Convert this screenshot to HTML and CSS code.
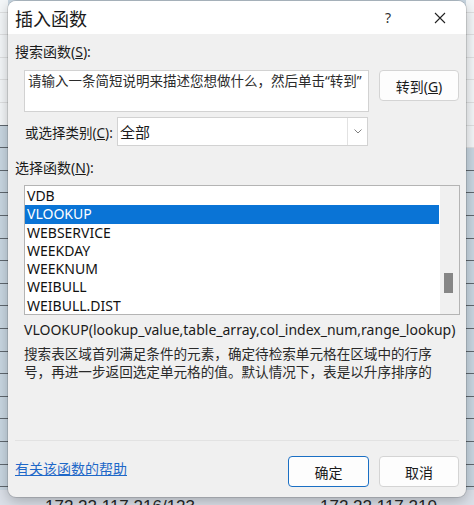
FILE: index.html
```html
<!DOCTYPE html>
<html lang="zh-CN">
<head>
    <meta charset="UTF-8">
    <title>插入函数</title>
    <link rel="stylesheet" href="styles.css">
</head>
<body>
    <div class="dialog">
        <div class="titlebar">
            <span class="title">插入函数</span>
            <span class="help">?</span>
            <span class="close">
                <svg width="12" height="12" viewBox="0 0 12 12"><path d="M1 1L11 11M11 1L1 11" stroke="#222" stroke-width="1.1" fill="none"/></svg>
            </span>
        </div>

        <div class="body">
            <div class="label">搜索函数(<u>S</u>):</div>
            <div class="search-row">
                <div class="search-box">请输入一条简短说明来描述您想做什么，然后单击“转到”</div>
                <button class="btn">转到(<u>G</u>)</button>
            </div>

            <div class="category-row">
                <span class="category-label">或选择类别(<u>C</u>):</span>
                <div class="select">
                    <span class="select-value">全部</span>
                    <span class="select-arrow">
                        <svg width="8" height="5" viewBox="0 0 8 5"><path d="M0.5 0.5L4 4L7.5 0.5" stroke="#808080" stroke-width="1" fill="none"/></svg>
                    </span>
                </div>
            </div>

            <div class="label label-n">选择函数(<u>N</u>):</div>
            <div class="list">
                <div class="items">
                    <div class="item">VDB</div>
                    <div class="item selected">VLOOKUP</div>
                    <div class="item">WEBSERVICE</div>
                    <div class="item">WEEKDAY</div>
                    <div class="item">WEEKNUM</div>
                    <div class="item">WEIBULL</div>
                    <div class="item">WEIBULL.DIST</div>
                </div>
                <div class="scrollbar"><div class="thumb"></div></div>
            </div>

            <div class="signature">VLOOKUP(lookup_value,table_array,col_index_num,range_lookup)</div>
            <div class="desc">搜索表区域首列满足条件的元素，确定待检索单元格在区域中的行序号，再进一步返回选定单元格的值。默认情况下，表是以升序排序的</div>

            <div class="footer">
                <a class="help-link" href="#">有关该函数的帮助</a>
                <button class="btn btn-default">确定</button>
                <button class="btn">取消</button>
            </div>
        </div>
    </div>
    <div class="sheet-row">
        <span class="cell-a">172.22.117.216/123</span>
        <span class="cell-b">172.22.117.210</span>
    </div>
</body>
</html>
```

FILE: styles.css
```css
* {
    margin: 0;
    padding: 0;
    box-sizing: border-box;
}
body {
    width: 474px;
    height: 505px;
    overflow: hidden;
    font-family: "Noto Sans", "Noto Sans CJK SC", sans-serif;
    color: #1b1b1b;
    background:
        linear-gradient(to bottom, rgba(255, 255, 255, 0.8) 0 125px, transparent 125px) left top / 8px 100% no-repeat,
        linear-gradient(to bottom, rgba(255, 255, 255, 0.8) 0 148px, transparent 148px) right top / 8px 100% no-repeat,
        repeating-linear-gradient(to bottom, transparent 0 11.6px, #5f686f 11.6px 12.6px, transparent 12.6px 22.6px),
        linear-gradient(to bottom, #c9d7e2 0 490px, #dbe0e8 490px);
}
.dialog {
    width: 458px;
    height: 496px;
    margin: 1px 0 0 8px;
    background: #f0f0f0;
    border-radius: 8px;
    overflow: hidden;
    display: flex;
    flex-direction: column;
    box-shadow: 0 0 0 1px rgba(0, 0, 0, 0.12), 0 4px 14px rgba(0, 0, 0, 0.25);
}
.titlebar {
    height: 33px;
    background: #fff;
    display: flex;
    align-items: center;
    padding: 0 7px;
}
.title {
    font-family: "Noto Sans CJK SC", sans-serif;
    font-size: 18px;
    color: #1a1a1a;
}
.help {
    margin-left: auto;
    font-size: 14px;
    color: #333;
    width: 12px;
    text-align: center;
}
.close {
    display: flex;
    margin: 0 13px 0 40px;
}
.body {
    flex: 1;
    display: flex;
    flex-direction: column;
    padding: 0 7px;
}
.label {
    font-size: 14px;
    line-height: 20px;
    margin-top: 8px;
}
.search-row {
    display: flex;
    align-items: flex-start;
    margin-top: 8px;
    margin-left: 9px;
}
.search-box {
    width: 345px;
    height: 42px;
    background: #fff;
    border: 1px solid #d2d2d2;
    font-size: 13.5px;
    line-height: 18px;
    padding: 1px 3px;
    color: #2b2b2b;
    white-space: nowrap;
    overflow: hidden;
}
.btn {
    width: 80px;
    height: 31px;
    margin-left: 10px;
    background: #fdfdfd;
    border: 1px solid #d4d4d4;
    border-radius: 4px;
    font-family: "Noto Sans", "Noto Sans CJK SC", sans-serif;
    font-size: 14px;
    color: #1b1b1b;
}
.category-row {
    display: flex;
    align-items: center;
    margin-top: 5px;
    margin-left: 10px;
}
.category-label {
    width: 92px;
    font-size: 13.5px;
}
.select {
    width: 251px;
    height: 29px;
    display: flex;
    background: #fff;
    border: 1px solid #d2d2d2;
}
.select-value {
    flex: 1;
    font-family: "Noto Sans CJK SC", sans-serif;
    font-size: 15px;
    line-height: 27px;
    padding-left: 2px;
}
.select-arrow {
    width: 20px;
    border-left: 1px solid #e2e2e2;
    display: flex;
    align-items: center;
    justify-content: center;
}
.label-n {
    margin-top: 12px;
}
.list {
    width: 436px;
    height: 130px;
    margin: 7px 0 0 9px;
    border: 1px solid #b4b4b4;
    background: #fff;
    display: flex;
}
.items {
    flex: 1;
    padding: 1px 1px 0 0;
}
.item {
    height: 18.3px;
    line-height: 18px;
    font-size: 14px;
    padding-left: 2px;
    color: #111;
}
.item.selected {
    background: #0a74d6;
    color: #fff;
}
.scrollbar {
    width: 19px;
    background: #f0f0f0;
    padding-top: 87px;
}
.thumb {
    width: 9px;
    height: 20px;
    margin-left: 4px;
    background: #868686;
}
.signature {
    font-size: 14px;
    line-height: 20px;
    margin: 5px 0 0 9px;
    white-space: nowrap;
}
.desc {
    font-family: "Noto Sans CJK SC", sans-serif;
    font-size: 13.6px;
    line-height: 18px;
    width: 412px;
    margin: 4px 0 0 9px;
    color: #2a2a2a;
}
.footer {
    margin-top: auto;
    border-top: 1px solid #e2e2e2;
    display: flex;
    align-items: center;
    padding: 15px 0 10px;
}
.help-link {
    font-family: "Noto Sans CJK SC", sans-serif;
    font-size: 14px;
    color: #1f68c8;
    margin-right: auto;
    margin-top: -8px;
}
.btn-default {
    width: 81px;
    border-color: #1a6fc4;
}
.sheet-row {
    height: 8px;
    overflow: hidden;
    font-family: "Liberation Sans", sans-serif;
    font-size: 17px;
    line-height: 17px;
    color: #222;
    display: flex;
    padding-top: 1px;
}
.cell-a {
    margin-left: 45px;
}
.cell-b {
    margin-left: 125px;
}
```
